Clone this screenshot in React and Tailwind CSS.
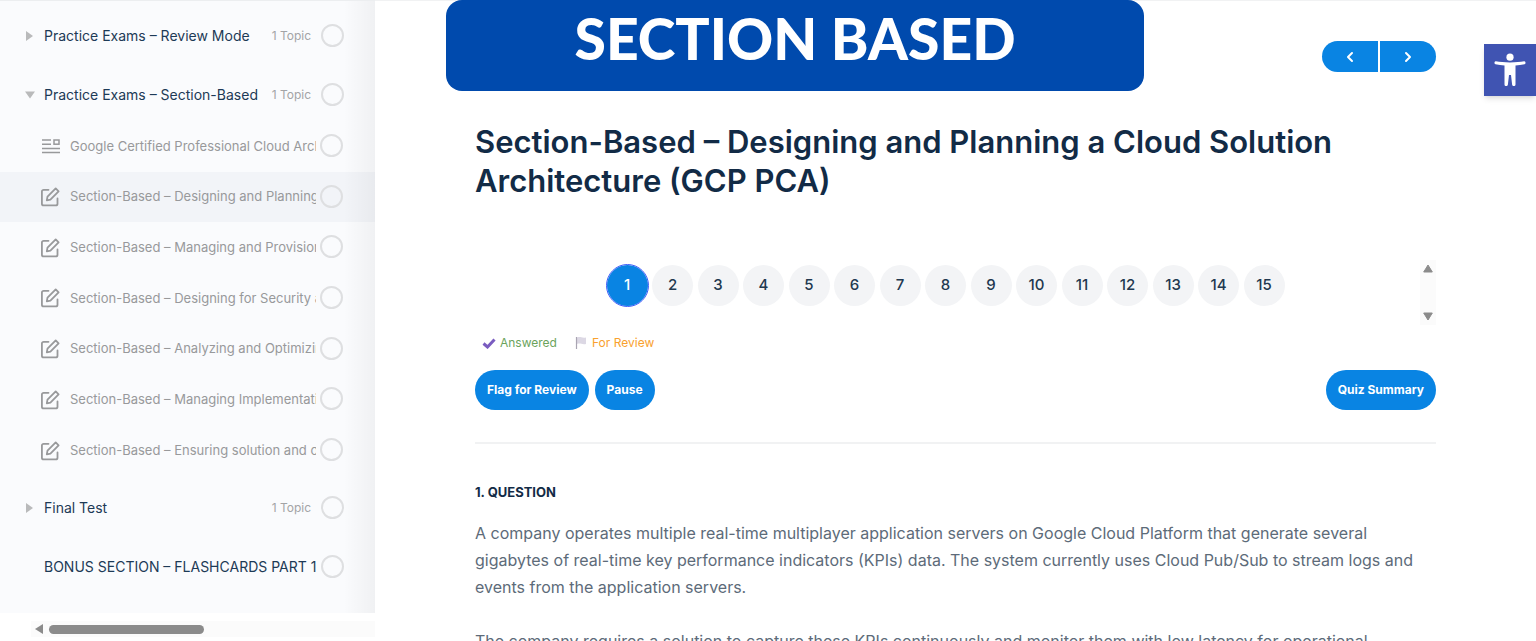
import { ChevronLeft, ChevronRight } from "lucide-react";

const quizzes = [
  "Section-Based – Designing and Planning a Cloud Solution Architecture",
  "Section-Based – Managing and Provisioning a Solution Infrastructure",
  "Section-Based – Designing for Security and Compliance",
  "Section-Based – Analyzing and Optimizing Technical Processes",
  "Section-Based – Managing Implementation",
  "Section-Based – Ensuring solution and operations reliability",
];

const numbers = [2, 3, 4, 5, 6, 7, 8, 9, 10, 11, 12, 13, 14, 15];

function Ring() {
  return <span className="size-[23px] shrink-0 rounded-full border-2 border-[#dedfe1]" />;
}

function Caret({ open }) {
  return (
    <svg viewBox="0 0 10 10" className="size-[10px] shrink-0 fill-[#b9babb]" aria-hidden="true">
      {open ? <path d="M0 1.500h10L5 8.500z" /> : <path d="M1 0l7 5-7 5z" />}
    </svg>
  );
}

function TopicIcon() {
  return (
    <svg viewBox="0 0 18 16" className="ml-[2px] h-4 w-[18px] shrink-0 fill-none stroke-[#98999b] stroke-[1.5]" aria-hidden="true">
      <path d="M0 2h9M0 6.200h9M0 10.400h18M0 14.600h18" />
      <rect x="12" y="2" width="5" height="4.200" />
    </svg>
  );
}

function QuizIcon() {
  return (
    <svg viewBox="0 0 20 20" className="size-5 shrink-0 fill-none stroke-[#98999b] stroke-[1.8]" strokeLinejoin="round" strokeLinecap="round" aria-hidden="true">
      <path d="M8.500 2.800H3.600a1.700 1.700 0 0 0-1.700 1.700v12.200a1.700 1.700 0 0 0 1.700 1.700h12.200a1.700 1.700 0 0 0 1.700-1.700V11.500" />
      <path d="M15.700 1.400l2.900 2.900-8.200 8.300-3.600.7.700-3.600z" />
    </svg>
  );
}

function Section({ title, topics, open, plain }) {
  return (
    <div className="flex h-[52px] items-center pl-[25px]">
      <span className="flex w-[19px] shrink-0">{!plain && <Caret open={open} />}</span>
      <a href="#section" className="min-w-0 flex-1 overflow-hidden text-sm whitespace-nowrap text-[#1d3a56]">
        {title}
      </a>
      {topics && <span className="pr-[6px] pl-2 text-xs whitespace-nowrap text-[#a3a4a6]">{topics}</span>}
      <span className="flex pb-[2px] pl-1">
        <Ring />
      </span>
    </div>
  );
}

function Topic({ title, icon, active }) {
  return (
    <li className={active ? "flex items-center bg-[#f2f4f8] pr-8 pl-10" : "flex items-center pr-8 pl-10"}>
      <span className="flex w-[30px] shrink-0">{icon}</span>
      <a href="#topic" className="min-w-0 flex-1 overflow-hidden text-[13px] whitespace-nowrap text-[#98999b]">
        {title}
      </a>
      <span className="flex pb-[2px] pl-1">
        <Ring />
      </span>
    </li>
  );
}

function Sidebar() {
  return (
    <aside className="flex w-[375px] shrink-0 flex-col">
      <nav className="relative border-t border-[#eceef0] bg-[#fafbfd] pt-[9px] pb-5">
        <div className="flex flex-col gap-[7px] pr-[31px]">
          <Section title="Practice Exams – Review Mode" topics="1 Topic" />
          <Section title="Practice Exams – Section-Based" topics="1 Topic" open />
        </div>
        <ul className="grid h-[355px] grid-cols-1 grid-rows-7">
          <Topic title="Google Certified Professional Cloud Architect" icon={<TopicIcon />} />
          {quizzes.map((q, i) => (
            <Topic key={q} title={q} icon={<QuizIcon />} active={i === 0} />
          ))}
        </ul>
        <div className="flex flex-col gap-[7px] pt-[6px] pr-[31px]">
          <Section title="Final Test" topics="1 Topic" />
          <Section title="BONUS SECTION – FLASHCARDS PART 1" plain />
        </div>
        <div className="pointer-events-none absolute inset-y-0 right-0 w-8 bg-linear-to-r from-transparent to-black/4" />
      </nav>
      <div className="mt-2 ml-[31px] flex h-4 items-center gap-[6px] bg-[#fbfbfb] pl-1">
        <svg viewBox="0 0 8 10" className="h-[10px] w-2 fill-[#8b8b8b]" aria-hidden="true">
          <path d="M8 0v10L0 5z" />
        </svg>
        <span className="h-[9px] w-[155px] rounded-full bg-[#8b8b8b]" />
      </div>
    </aside>
  );
}

export default function App() {
  return (
    <div className="flex h-screen overflow-hidden bg-white font-['Inter',sans-serif]">
      <Sidebar />
      <main className="min-w-0 flex-1 border-t border-[#f1f2f3] pr-[100px] pl-[71px]">
        <div className="-mt-px flex items-start justify-between">
          <div className="flex h-[91px] w-[698px] justify-center rounded-2xl bg-[#004aad] pt-[6px] font-['Lato',sans-serif] text-[57px] leading-[64px] font-black text-white">
            SECTION BASED
          </div>
          <div className="mt-[41px] flex gap-[2px] text-white">
            <button aria-label="Previous" className="flex h-[31px] w-[56px] items-center justify-center rounded-l-full bg-[#0984e3]">
              <ChevronLeft className="size-4" strokeWidth={3} />
            </button>
            <button aria-label="Next" className="flex h-[31px] w-[56px] items-center justify-center rounded-r-full bg-[#0984e3]">
              <ChevronRight className="size-4" strokeWidth={3} />
            </button>
          </div>
        </div>
        <div className="pl-[29px]">
          <h1 className="mt-[31px] text-[31px] leading-[39px] font-semibold text-[#122b46]">
            Section-Based – Designing and Planning a Cloud Solution Architecture (GCP PCA)
          </h1>
          <div className="mt-[60px] flex h-[65px]">
            <div className="flex flex-1 justify-center pt-[5px] pr-1">
              <div className="flex w-[678px] items-start justify-between text-[15px] font-medium text-[#22384f]">
                <button className="size-[41px] rounded-full bg-[#0984e3] text-white outline-1 outline-[#3b5bfa]">1</button>
                {numbers.map((n) => (
                  <button key={n} className="size-[41px] rounded-full bg-[#f3f4f6]">
                    {n}
                  </button>
                ))}
              </div>
            </div>
            <div className="flex w-4 flex-col items-center justify-between bg-[#fbfbfb] py-1">
              <svg viewBox="0 0 10 9" className="h-[9px] w-[10px] fill-[#8b8b8b] stroke-[#8b8b8b]" strokeLinejoin="round" aria-hidden="true">
                <path d="M5 1l4.300 7H.7z" />
              </svg>
              <svg viewBox="0 0 10 9" className="h-[9px] w-[10px] fill-[#8b8b8b] stroke-[#8b8b8b]" strokeLinejoin="round" aria-hidden="true">
                <path d="M5 8L9.300 1H.7z" />
              </svg>
            </div>
          </div>
          <div className="mt-2 flex h-5 items-center pl-[7px] text-xs">
            <svg viewBox="0 0 14 12" className="h-3 w-[14px] fill-none stroke-[#7a5cc0] stroke-[3]" aria-hidden="true">
              <path d="M1.500 6.500l4 3.500L12.500 2.500" />
            </svg>
            <span className="pl-1 text-[#6ba35c]">Answered</span>
            <svg viewBox="0 0 12 14" className="ml-[18px] h-[14px] w-3" aria-hidden="true">
              <path d="M2 1.500c3-1.500 5 1 9 0v6.500c-4 1-6-1.500-9 0z" fill="#dcd8e4" />
              <path d="M1.500 1v12" stroke="#a9a5b2" strokeWidth="1.200" />
            </svg>
            <span className="pl-[5px] text-[#f9a12e]">For Review</span>
          </div>
          <div className="mt-[17px] flex gap-[6px] text-xs font-bold text-white">
            <button className="h-10 rounded-full bg-[#0984e3] px-3">Flag for Review</button>
            <button className="h-10 rounded-full bg-[#0984e3] px-3">Pause</button>
            <button className="ml-auto h-10 rounded-full bg-[#0984e3] px-3">Quiz Summary</button>
          </div>
          <hr className="mt-8 border-t-2 border-[#f1f2f3]" />
          <h2 className="mt-[39px] text-[13px] leading-[18px] font-bold text-[#122b46]">1. QUESTION</h2>
          <p className="mt-[19px] text-base leading-[27px] text-[#5d6b79]">
            A company operates multiple real-time multiplayer application servers on Google Cloud Platform that generate
            several gigabytes of real-time key performance indicators (KPIs) data. The system currently uses Cloud
            Pub/Sub to stream logs and events from the application servers.
          </p>
          <p className="mt-[27px] text-base leading-[27px] text-[#5d6b79]">
            The company requires a solution to capture these KPIs continuously and monitor them with low latency for
            operational
          </p>
        </div>
      </main>
      <button
        aria-label="Accessibility tools"
        className="absolute top-11 right-0 flex h-[52px] w-[52px] items-center justify-center bg-[#4054b2] shadow-md"
      >
        <svg viewBox="0 0 32 34" className="h-[34px] w-8 fill-white" aria-hidden="true">
          <circle cx="16" cy="4.200" r="3.600" />
          <path d="M1.800 8.300C6 9 10 9.400 16 9.400s10-.4 14.200-1.100c1.500-.2 1.900 2.500.3 2.900-3 .7-6 1-9 1.300v19c0 2-3.200 2-3.400 0L17 22h-2l-1.100 9.500c-.2 2-3.400 2-3.400 0v-19c-3-.3-6-.6-9-1.300-1.600-.4-1.200-3.100.3-2.900z" />
        </svg>
      </button>
    </div>
  );
}
